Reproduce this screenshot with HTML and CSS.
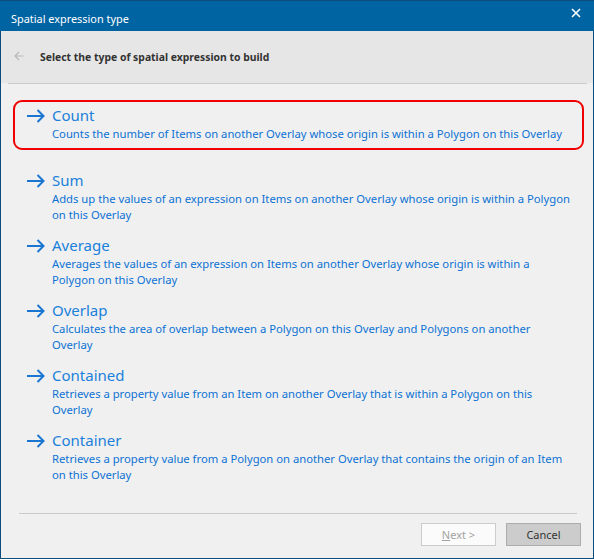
FILE: index.html
```html
<!DOCTYPE html>
<html>
<head>
<meta charset="utf-8">
<link rel="stylesheet" href="styles.css">
</head>
<body>
<div class="window">
  <div class="titlebar">
    <span class="title">Spatial expression type</span>
    <svg class="close" width="10" height="10" viewBox="0 0 10 10"><path d="M1 1 L9 9 M9 1 L1 9" stroke="#fff" stroke-width="1.6" fill="none"/></svg>
  </div>
  <div class="header">
    <svg class="back" width="10" height="10" viewBox="0 0 10 10"><path d="M9.5 5 H1 M5 1 L1 5 L5 9" stroke="#b9b9b9" stroke-width="1.2" fill="none"/></svg>
    <span class="heading">Select the type of spatial expression to build</span>
  </div>
  <div class="sep-top"></div>
  <div class="list">
    <div class="item selected">
      <svg class="arrow" width="18" height="14" viewBox="0 0 18 14"><path d="M0 7 H16.5 M10.5 1 L16.5 7 L10.5 13" stroke="#1b76d2" stroke-width="2" fill="none"/></svg>
      <div class="text">
        <div class="name">Count</div>
        <div class="desc">Counts the number of Items on another Overlay whose origin is within a Polygon on this Overlay</div>
      </div>
    </div>
    <div class="item">
      <svg class="arrow" width="18" height="14" viewBox="0 0 18 14"><path d="M0 7 H16.5 M10.5 1 L16.5 7 L10.5 13" stroke="#1b76d2" stroke-width="2" fill="none"/></svg>
      <div class="text">
        <div class="name">Sum</div>
        <div class="desc">Adds up the values of an expression on Items on another Overlay whose origin is within a Polygon</div>
        <div class="desc">on this Overlay</div>
      </div>
    </div>
    <div class="item">
      <svg class="arrow" width="18" height="14" viewBox="0 0 18 14"><path d="M0 7 H16.5 M10.5 1 L16.5 7 L10.5 13" stroke="#1b76d2" stroke-width="2" fill="none"/></svg>
      <div class="text">
        <div class="name">Average</div>
        <div class="desc">Averages the values of an expression on Items on another Overlay whose origin is within a</div>
        <div class="desc">Polygon on this Overlay</div>
      </div>
    </div>
    <div class="item">
      <svg class="arrow" width="18" height="14" viewBox="0 0 18 14"><path d="M0 7 H16.5 M10.5 1 L16.5 7 L10.5 13" stroke="#1b76d2" stroke-width="2" fill="none"/></svg>
      <div class="text">
        <div class="name">Overlap</div>
        <div class="desc">Calculates the area of overlap between a Polygon on this Overlay and Polygons on another</div>
        <div class="desc">Overlay</div>
      </div>
    </div>
    <div class="item">
      <svg class="arrow" width="18" height="14" viewBox="0 0 18 14"><path d="M0 7 H16.5 M10.5 1 L16.5 7 L10.5 13" stroke="#1b76d2" stroke-width="2" fill="none"/></svg>
      <div class="text">
        <div class="name">Contained</div>
        <div class="desc">Retrieves a property value from an Item on another Overlay that is within a Polygon on this</div>
        <div class="desc">Overlay</div>
      </div>
    </div>
    <div class="item">
      <svg class="arrow" width="18" height="14" viewBox="0 0 18 14"><path d="M0 7 H16.5 M10.5 1 L16.5 7 L10.5 13" stroke="#1b76d2" stroke-width="2" fill="none"/></svg>
      <div class="text">
        <div class="name">Container</div>
        <div class="desc">Retrieves a property value from a Polygon on another Overlay that contains the origin of an Item</div>
        <div class="desc">on this Overlay</div>
      </div>
    </div>
  </div>
  <div class="footer">
    <div class="sep-bottom"></div>
    <div class="buttons">
      <button class="btn disabled"><u>N</u>ext &gt;</button>
      <button class="btn cancel">Cancel</button>
    </div>
  </div>
</div>
</body>
</html>
```
FILE: styles.css
```css
html, body {
  margin: 0;
  padding: 0;
  background: #f0f0f0;
}
body {
  width: 594px;
  height: 559px;
  overflow: hidden;
  font-family: "Noto Sans", "Open Sans", sans-serif;
}
.window {
  box-sizing: border-box;
  width: 594px;
  height: 559px;
  border: 1px solid #0d4d7e;
  border-top: none;
  background: #f0f0f0;
  display: flex;
  flex-direction: column;
}
.titlebar {
  height: 31px;
  background: #0064a2;
  display: flex;
  align-items: center;
  justify-content: space-between;
  padding: 0 13px 0 11px;
  margin: 0 -1px;
  border-top: 1px solid #0d4d7e;
  box-sizing: border-box;
}
.title {
  color: #fff;
  font-size: 10.9px;
  margin-top: 5px;
}
.close {
  margin-top: -7px;
}
.header {
  height: 52px;
  background: #e6e6e6;
  display: flex;
  align-items: center;
  padding-left: 13px;
  box-sizing: border-box;
}
.back {
  margin-right: 16px;
  margin-top: -2px;
}
.heading {
  font-size: 10.4px;
  font-weight: bold;
  color: #333;
}
.sep-top {
  height: 1px;
  background: #cccccc;
  margin: 0 6px 0 7px;
}
.list {
  display: flex;
  flex-direction: column;
  gap: 15px;
  padding: 16px 9px 0 12px;
}
.item {
  height: 50px;
  box-sizing: border-box;
  border: 2px solid transparent;
  border-radius: 9px;
  display: flex;
  align-items: flex-start;
  padding: 4px 0 0 12px;
}
.item.selected {
  border-color: #f00000;
}
.arrow {
  margin-top: 3px;
  margin-right: 7px;
  flex: none;
}
.name {
  font-size: 15px;
  line-height: 19px;
  margin-bottom: 1px;
  color: #1a80da;
}
.desc {
  font-size: 11.25px;
  line-height: 16px;
  color: #0d72d4;
  white-space: nowrap;
}
.footer {
  margin-top: auto;
  padding: 0 16px 12px 18px;
}
.sep-bottom {
  height: 1px;
  background: #cbcbcb;
  margin-right: 0;
}
.buttons {
  display: flex;
  justify-content: flex-end;
  gap: 10px;
  margin-top: 9px;
  margin-right: -4px;
}
.btn {
  width: 75px;
  height: 23px;
  box-sizing: border-box;
  font-family: "Noto Sans", "Open Sans", sans-serif;
  font-size: 11px;
  padding: 0;
}
.btn.disabled {
  background: #fbfbfb;
  border: 1px solid #cccccc;
  color: #a3a3a3;
}
.btn.cancel {
  background: #cccccc;
  border: 1px solid #adadad;
  color: #333;
}
```
